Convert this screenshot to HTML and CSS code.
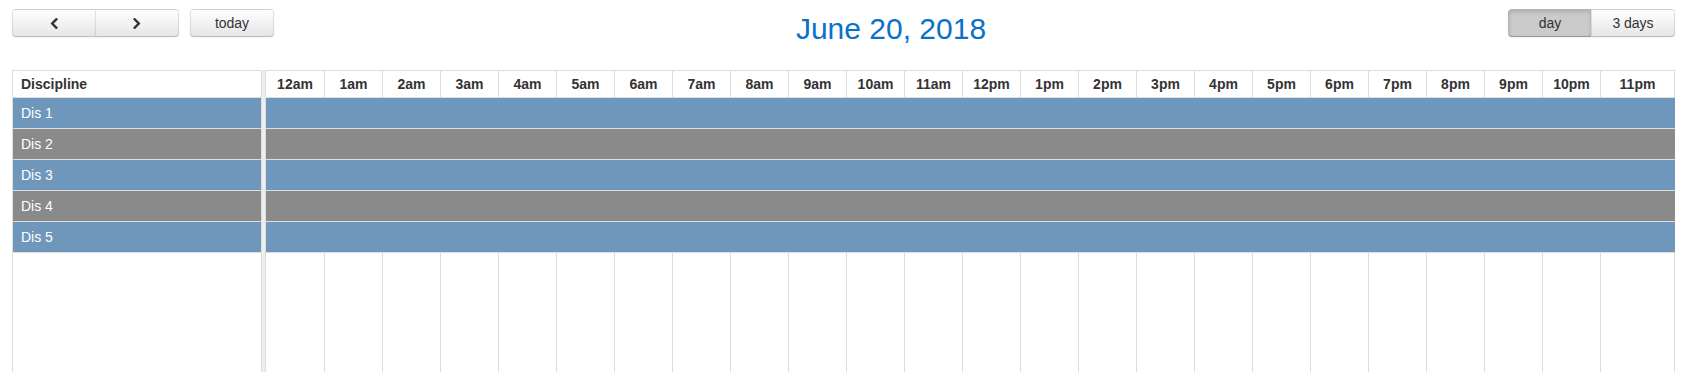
FILE: index.html
```html
<!DOCTYPE html>
<html>
<head>
<meta charset="utf-8">
<link rel="stylesheet" href="styles.css">
</head>
<body>
<div class="cal">
  <div class="toolbar">
    <div class="tb-left">
      <div class="group">
        <button class="btn"><svg class="chev" viewBox="0 0 8 11" width="8" height="11"><polyline points="6.3,1.3 2.2,5.5 6.3,9.7"/></svg></button>
        <button class="btn"><svg class="chev" viewBox="0 0 8 11" width="8" height="11"><polyline points="1.7,1.3 5.8,5.5 1.7,9.7"/></svg></button>
      </div>
      <button class="btn solo">today</button>
    </div>
    <div class="tb-center"><h2 class="title">June 20, 2018</h2></div>
    <div class="tb-right">
      <div class="group">
        <button class="btn active">day</button>
        <button class="btn">3 days</button>
      </div>
    </div>
  </div>

  <div class="view">
    <div class="res-pane">
      <div class="res-head">Discipline</div>
      <div class="res-row blue">Dis 1</div>
      <div class="res-row gray">Dis 2</div>
      <div class="res-row blue">Dis 3</div>
      <div class="res-row gray">Dis 4</div>
      <div class="res-row blue">Dis 5</div>
      <div class="res-fill"></div>
    </div>
    <div class="divider"></div>
    <div class="time-pane">
      <div class="time-head">
        <div>12am</div><div>1am</div><div>2am</div><div>3am</div><div>4am</div><div>5am</div>
        <div>6am</div><div>7am</div><div>8am</div><div>9am</div><div>10am</div><div>11am</div>
        <div>12pm</div><div>1pm</div><div>2pm</div><div>3pm</div><div>4pm</div><div>5pm</div>
        <div>6pm</div><div>7pm</div><div>8pm</div><div>9pm</div><div>10pm</div><div>11pm</div>
      </div>
      <div class="time-body">
        <div class="slats">
          <div></div><div></div><div></div><div></div><div></div><div></div>
          <div></div><div></div><div></div><div></div><div></div><div></div>
          <div></div><div></div><div></div><div></div><div></div><div></div>
          <div></div><div></div><div></div><div></div><div></div><div></div>
        </div>
        <div class="lanes">
          <div class="lane blue"></div>
          <div class="lane gray"></div>
          <div class="lane blue"></div>
          <div class="lane gray"></div>
          <div class="lane blue"></div>
        </div>
      </div>
    </div>
  </div>
</div>
</body>
</html>
```

FILE: styles.css
```css
* { box-sizing: border-box; }
html, body {
  margin: 0;
  padding: 0;
  overflow: hidden;
  background: #fff;
}
body {
  font-family: "Liberation Sans", Arial, sans-serif;
  font-size: 14px;
  color: #333;
}
.cal {
  padding: 9px 17px 0 12px;
}

/* toolbar */
.toolbar {
  display: flex;
  align-items: flex-start;
  height: 28px;
  margin-bottom: 33px;
}
.tb-left {
  display: flex;
  gap: 11px;
}
.tb-center {
  flex: 1;
  text-align: center;
}
.tb-right {
  display: flex;
}
.title {
  margin: 3px 0 0;
  font-size: 30px;
  font-weight: normal;
  line-height: 34px;
  color: #0a72c6;
}
.group {
  display: flex;
}
.btn {
  height: 28px;
  width: 84px;
  padding: 0;
  border: 1px solid;
  border-color: rgba(0,0,0,.1) rgba(0,0,0,.1) rgba(0,0,0,.25);
  background: linear-gradient(#fff, #e6e6e6);
  box-shadow: inset 0 1px 0 rgba(255,255,255,.2), 0 1px 2px rgba(0,0,0,.05);
  border-radius: 4px;
  font: inherit;
  color: #333;
  display: flex;
  align-items: center;
  justify-content: center;
}
.group .btn:first-child {
  border-radius: 4px 0 0 4px;
}
.group .btn:last-child {
  border-radius: 0 4px 4px 0;
  margin-left: -1px;
}
.btn.active {
  background: #cbcbcb;
  box-shadow: inset 0 2px 4px rgba(0,0,0,.15), 0 1px 2px rgba(0,0,0,.05);
}
.chev {
  display: block;
}
.chev polyline {
  fill: none;
  stroke: #333;
  stroke-width: 2.4;
  stroke-linecap: square;
  stroke-linejoin: miter;
}

/* view */
.view {
  display: flex;
}
.res-pane {
  width: 249px;
  border-left: 1px solid #ddd;
}
.res-head {
  height: 28px;
  border-top: 1px solid #ddd;
  border-bottom: 1px solid #ddd;
  padding: 0 8px;
  font-weight: bold;
  display: flex;
  align-items: center;
}
.res-row {
  height: 31px;
  border-bottom: 1px solid #ddd;
  color: #fff;
  padding: 0 8px;
  display: flex;
  align-items: center;
}
.blue { background: #6f96bb; }
.gray { background: #8a8a8a; }
.res-fill {
  height: 119px;
}
.divider {
  width: 5px;
  border-left: 1px solid #ddd;
  border-right: 1px solid #ddd;
  background: #eee;
}
.time-pane {
  width: 1409px;
}
.time-head,
.slats {
  display: grid;
  grid-template-columns: 59px repeat(22, 58px) 74px;
}
.time-head {
  height: 28px;
  border-top: 1px solid #ddd;
  border-bottom: 1px solid #ddd;
}
.time-head div {
  border-right: 1px solid #ddd;
  display: flex;
  align-items: center;
  justify-content: center;
  font-weight: bold;
}
.time-body {
  display: grid;
  grid-template-areas: "stack";
}
.slats {
  grid-area: stack;
  height: 274px;
}
.slats div {
  border-right: 1px solid #ddd;
}
.lanes {
  grid-area: stack;
  display: flex;
  flex-direction: column;
}
.lane {
  height: 31px;
  border-bottom: 1px solid #ddd;
}
```
